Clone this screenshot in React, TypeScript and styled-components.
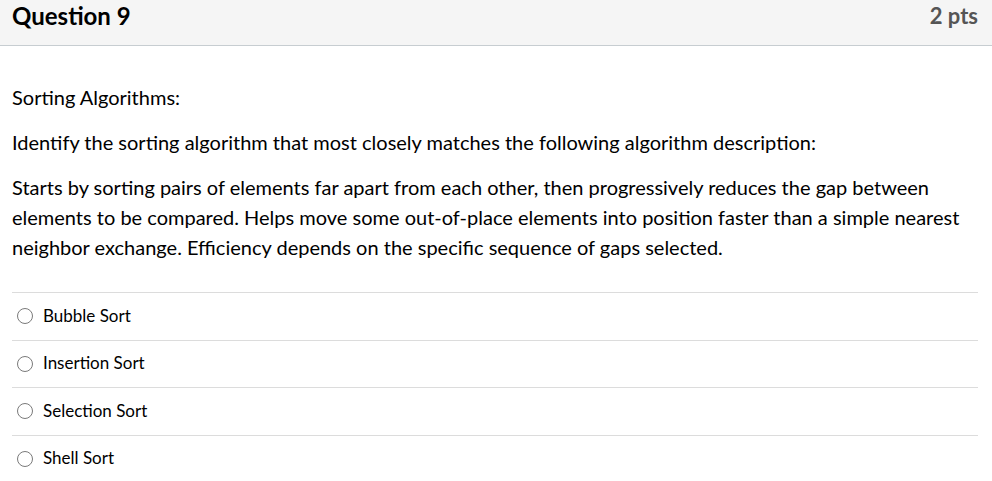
import styled, { createGlobalStyle } from "styled-components";

const GlobalStyle = createGlobalStyle`
	body {
		margin: 0;
		background: #fff;
		font-family: Lato, "Liberation Sans", sans-serif;
		color: #2d3b45;
	}
`;

const Header = styled.div`
	display: flex;
	justify-content: space-between;
	align-items: center;
	height: 46px;
	padding: 0 14px 0 12px;
	background: #f5f5f5;
	border-bottom: 1px solid #c7cdd1;
	box-sizing: border-box;
`;
const Title = styled.h2`
	margin: 0;
	font-size: 24px;
	font-weight: 700;
	color: #000;
	position: relative;
	top: -7px;
`;
const Points = styled.span`
	font-size: 22px;
	font-weight: 700;
	color: #555;
	position: relative;
	top: -7px;
`;
const Body = styled.div`
	padding: 36px 12px 0 12px;
`;
const Text = styled.p`
	margin: 0 0 15px;
	font-size: 20px;
	line-height: 30px;
	color: #000;
`;
const Answers = styled.div`
	margin-top: 30px;
	margin-right: 2px;
`;
const Answer = styled.label`
	display: flex;
	align-items: center;
	gap: 10px;
	height: 47.5px;
	padding: 0 0 2px 5px;
	box-sizing: border-box;
	border-top: 1px solid #dcdcdc;
	font-size: 17px;
	color: #000;
`;
const Radio = styled.span`
	width: 16px;
	height: 16px;
	margin-top: 2px;
	border: 1px solid #7a7a7a;
	border-radius: 50%;
	box-sizing: border-box;
`;

const options = ["Bubble Sort", "Insertion Sort", "Selection Sort", "Shell Sort"];

function App() {
	return (
		<>
			<GlobalStyle />
			<Header>
				<Title>Question 9</Title>
				<Points>2 pts</Points>
			</Header>
			<Body>
				<Text>Sorting Algorithms:</Text>
				<Text>Identify the sorting algorithm that most closely matches the following algorithm description:</Text>
				<Text>
					Starts by sorting pairs of elements far apart from each other, then progressively reduces the gap between
					elements to be compared. Helps move some out-of-place elements into position faster than a simple nearest
					neighbor exchange. Efficiency depends on the specific sequence of gaps selected.
				</Text>
				<Answers>
					{options.map((o) => (
						<Answer key={o}>
							<Radio />
							{o}
						</Answer>
					))}
				</Answers>
			</Body>
		</>
	);
}

export default App;
